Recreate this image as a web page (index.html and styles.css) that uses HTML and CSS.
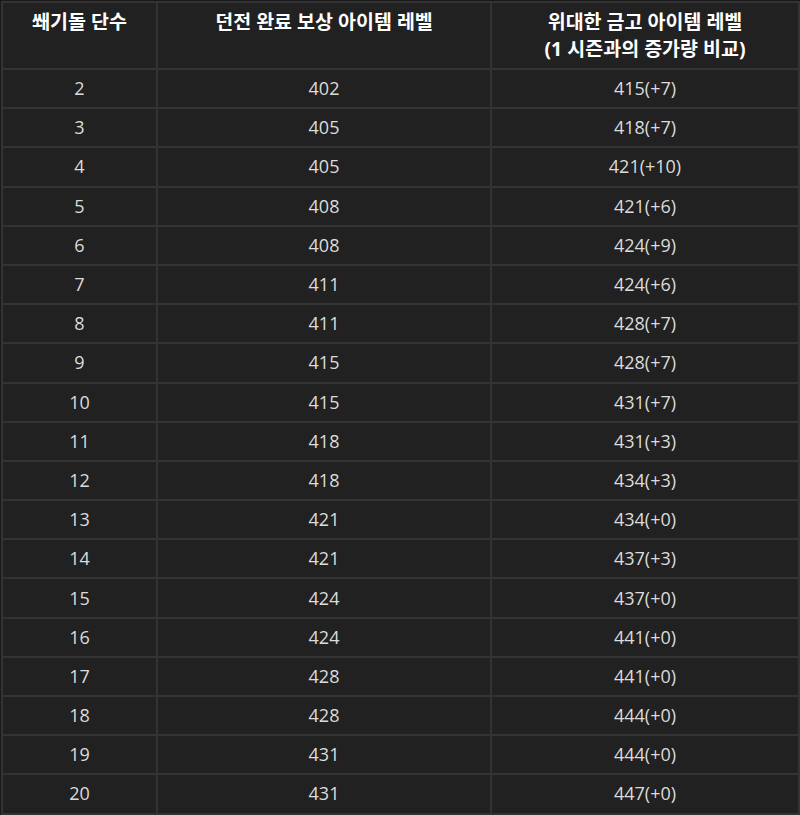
FILE: index.html
```html
<!DOCTYPE html>
<html lang="ko">
<head>
<meta charset="utf-8">
<link rel="stylesheet" href="styles.css">
</head>
<body>
<table class="tbl">
<colgroup><col class="c1"><col class="c2"><col class="c3"></colgroup>
<thead>
<tr><th>쐐기돌 단수</th><th>던전 완료 보상 아이템 레벨</th><th>위대한 금고 아이템 레벨<br>(1 시즌과의 증가량 비교)</th></tr>
</thead>
<tbody>
<tr><td>2</td><td>402</td><td>415(+7)</td></tr>
<tr><td>3</td><td>405</td><td>418(+7)</td></tr>
<tr><td>4</td><td>405</td><td>421(+10)</td></tr>
<tr><td>5</td><td>408</td><td>421(+6)</td></tr>
<tr><td>6</td><td>408</td><td>424(+9)</td></tr>
<tr><td>7</td><td>411</td><td>424(+6)</td></tr>
<tr><td>8</td><td>411</td><td>428(+7)</td></tr>
<tr><td>9</td><td>415</td><td>428(+7)</td></tr>
<tr><td>10</td><td>415</td><td>431(+7)</td></tr>
<tr><td>11</td><td>418</td><td>431(+3)</td></tr>
<tr><td>12</td><td>418</td><td>434(+3)</td></tr>
<tr><td>13</td><td>421</td><td>434(+0)</td></tr>
<tr><td>14</td><td>421</td><td>437(+3)</td></tr>
<tr><td>15</td><td>424</td><td>437(+0)</td></tr>
<tr><td>16</td><td>424</td><td>441(+0)</td></tr>
<tr><td>17</td><td>428</td><td>441(+0)</td></tr>
<tr><td>18</td><td>428</td><td>444(+0)</td></tr>
<tr><td>19</td><td>431</td><td>444(+0)</td></tr>
<tr><td>20</td><td>431</td><td>447(+0)</td></tr>
</tbody>
</table>
</body>
</html>
```
FILE: styles.css
```css
html, body {
  margin: 0;
  padding: 0;
  background: #191919;
}
body {
  padding: 1px 0 0 1px;
  font-family: "Open Sans", "Noto Sans CJK KR", sans-serif;
  font-size: 18px;
  color: #dcdcdc;
}
.tbl {
  border-collapse: collapse;
  width: 797px;
  table-layout: fixed;
  background: #212121;
}
.c1 { width: 155px; }
.c2 { width: 334px; }
.c3 { width: 308px; }
.tbl th, .tbl td {
  border: 2px solid #333333;
  text-align: center;
  padding: 0;
}
.tbl th {
  vertical-align: top;
  height: 67px;
  box-sizing: border-box;
  padding-top: 5px;
  font-size: 19.5px;
  font-weight: 700;
  color: #ffffff;
  line-height: 27px;
}
.tbl td {
  height: 39.2px;
  box-sizing: border-box;
  line-height: 35px;
}
```
